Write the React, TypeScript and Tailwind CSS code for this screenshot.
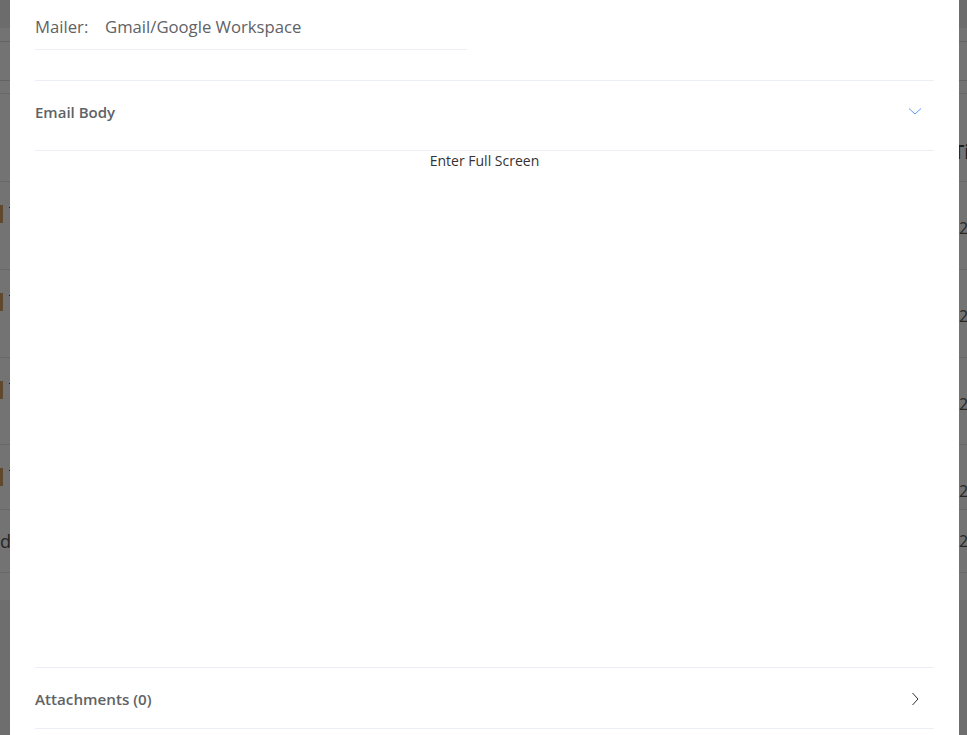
import React from "react";

const rows = [
  { h: 88, box: true, right: "2" },
  { h: 88, box: true, right: "2" },
  { h: 87, box: true, right: "2" },
  { h: 65, box: true, right: "2" },
  { h: 63, box: false, right: "2" },
];

function Background() {
  return (
    <div className="flex h-[735px] w-[967px] flex-col bg-white text-[#333]">
      <div className="h-[28px] bg-[#f0f0f0]" />
      <div className="h-[14px] border-b border-[#dcdcdc]" />
      <div className="h-[39px] border-b border-[#dcdcdc]" />
      <div className="h-[13px] border-b border-[#e6e6e6]" />
      <div className="flex h-[88px] items-center justify-end border-b border-[#e6e6e6] pt-[28px]">
        <span className="w-[14px] text-[20px] font-semibold leading-none text-[#444]">Ti</span>
      </div>
      {rows.map((r, i) => (
        <div
          key={i}
          style={{ height: r.h }}
          className={
            r.box
              ? "flex items-start justify-between border-b border-[#e6e6e6] pt-[23px]"
              : "flex items-center justify-between border-b border-[#e6e6e6]"
          }
        >
          {r.box ? (
            <div className="flex items-start gap-[6px]">
              <div className="h-[18px] w-[3px] bg-[#d6a064]" />
              <div className="mt-[2px] h-px w-[3px] bg-[#444]" />
            </div>
          ) : (
            <span className="text-[18px] text-[#555]">d</span>
          )}
          <span
            className={
              r.box
                ? "mt-[15px] w-[8px] text-[16px] leading-none text-[#555]"
                : "w-[8px] text-[16px] text-[#555]"
            }
          >
            {r.right}
          </span>
        </div>
      ))}
      <div className="h-[27px]" />
      <div className="flex-1 bg-[#f4f4f4]" />
    </div>
  );
}

function ChevronDown() {
  return (
    <svg width="14" height="10" viewBox="0 0 14 10" fill="none">
      <path d="M1 2.5 L7 8 L13 2.5" stroke="#5a9cf0" strokeWidth="1" />
    </svg>
  );
}

function ChevronRight() {
  return (
    <svg width="8" height="14" viewBox="0 0 8 14" fill="none">
      <path d="M1.5 1 L7 7 L1.5 13" stroke="#303133" strokeWidth="1" />
    </svg>
  );
}

export default function App() {
  return (
    <div
      className="relative h-[735px] w-[967px] overflow-hidden"
      style={{ fontFamily: '"Open Sans", "Noto Sans", sans-serif' }}
    >
      <Background />
      <div className="absolute inset-0 bg-black/55" />
      <div className="absolute left-[10px] top-0 flex h-[735px] w-[949px] flex-col bg-white px-[25px]">
        <div className="flex h-[50px] w-[432px] items-center border-b border-[#ebeef5] pt-[4px] text-[16.7px] text-[#606266]">
          <span className="w-[70px]">Mailer:</span>
          <span>Gmail/Google Workspace</span>
        </div>
        <div className="h-[30px]" />
        <div className="flex h-[71px] items-center justify-between border-y border-[#ebeef5] pb-[6px] pr-[12px]">
          <span className="text-[15px] font-semibold text-[#606266]">Email Body</span>
          <span className="mb-[4px]">
            <ChevronDown />
          </span>
        </div>
        <div className="flex h-[516px] flex-col">
          <div className="text-center text-[14px] leading-[20px] text-[#333]">Enter Full Screen</div>
        </div>
        <div className="flex h-[62px] items-center justify-between border-y border-[#ebeef5] pr-[15px] pt-[2px]">
          <span className="text-[15.2px] font-semibold text-[#606266]">Attachments (0)</span>
          <ChevronRight />
        </div>
      </div>
    </div>
  );
}
